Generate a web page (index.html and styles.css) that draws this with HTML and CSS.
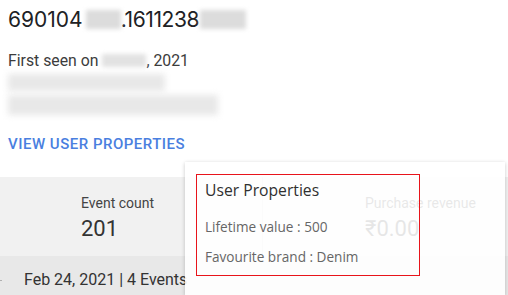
FILE: index.html
```html
<!DOCTYPE html>
<html>
<head>
<meta charset="utf-8">
<link rel="stylesheet" href="styles.css">
</head>
<body>
<div class="header">
  <h1 class="user-id"><span class="id-part">690104</span><span class="blur blur-a"></span><span class="id-part id-tail">.1611238</span><span class="blur blur-b"></span></h1>
  <div class="first-seen">First seen on <span class="blur blur-c"></span>, 2021</div>
  <div class="blur-line line-1"></div>
  <div class="blur-line line-2"></div>
  <div class="link">VIEW USER PROPERTIES</div>
</div>
<div class="stats">
  <div class="stat stat-first">
    <div class="stat-label">Event count</div>
    <div class="stat-value">201</div>
  </div>
  <div class="stat stat-second">
    <div class="stat-label">Purchase revenue</div>
    <div class="stat-value">₹0.00</div>
  </div>
</div>
<div class="day-strip">
  <span class="chev"></span>
  <span class="day-text">Feb 24, 2021 | 4 Events</span>
</div>
<div class="popover">
  <div class="highlight">
    <div class="pop-title">User Properties</div>
    <div class="pop-row">Lifetime value : 500</div>
    <div class="pop-row">Favourite brand : Denim</div>
  </div>
</div>
</body>
</html>
```
FILE: styles.css
```css
html, body {
  margin: 0;
  padding: 0;
  background: #ffffff;
  overflow: hidden;
}
body {
  font-family: Roboto, "Liberation Sans", sans-serif;
  color: #333333;
  width: 508px;
  height: 295px;
  position: relative;
}
.header {
  padding: 5px 8px 0 8px;
}
.user-id {
  margin: 0;
  font-family: Inter, Roboto, sans-serif;
  font-size: 21px;
  font-weight: 400;
  line-height: 29px;
  color: #202124;
  white-space: nowrap;
  display: flex;
  align-items: flex-start;
}
.id-part {
  display: inline-block;
}
.id-tail {
  letter-spacing: -0.4px;
}
.blur {
  display: inline-block;
  vertical-align: top;
  background: #dcdcdc;
  filter: blur(2px);
}
.blur-a {
  width: 35px;
  height: 19px;
  margin-top: 5px;
  margin-left: 3px;
}
.blur-b {
  width: 46px;
  height: 19px;
  margin-top: 5px;
  margin-left: 1px;
}
.first-seen {
  margin-top: 16px;
  font-size: 15.8px;
  line-height: 21px;
  color: #3c3c3c;
  white-space: nowrap;
}
.blur-c {
  width: 44px;
  height: 13px;
  margin-top: 4px;
  background: #e2e2e2;
}
.blur-line {
  background: #e8e8e8;
  filter: blur(3px);
}
.line-1 {
  width: 157px;
  height: 17px;
  margin-top: 3px;
}
.line-2 {
  width: 210px;
  height: 20px;
  margin-top: 4px;
}
.link {
  margin-top: 19px;
  font-size: 15px;
  font-weight: 500;
  line-height: 20px;
  letter-spacing: 0.5px;
  color: #4a7fe0;
  white-space: nowrap;
}
.stats {
  margin-top: 23px;
  height: 79px;
  background: #f1f1f1;
  display: flex;
}
.stat {
  padding-top: 16px;
  box-sizing: border-box;
}
.stat-first {
  width: 262px;
  padding-left: 81px;
}
.stat-second {
  border-left: 1px solid #d9d9d9;
  padding-left: 102px;
}
.stat-label {
  font-size: 14px;
  line-height: 20px;
  color: #444444;
  white-space: nowrap;
}
.stat-value {
  margin-top: 2px;
  font-size: 22px;
  line-height: 28px;
  color: #333333;
  white-space: nowrap;
}
.day-strip {
  height: 40px;
  background: #e8e8e8;
  padding-top: 14px;
  box-sizing: border-box;
  display: flex;
  align-items: flex-start;
}
.chev {
  width: 2px;
  height: 1px;
  margin-top: 10px;
  background: #b0b0b0;
}
.day-text {
  margin-left: 22px;
  font-size: 16px;
  line-height: 20px;
  color: #333333;
  white-space: nowrap;
}
.popover {
  position: absolute;
  left: 185px;
  top: 162px;
  width: 320px;
  height: 133px;
  background: rgba(255, 255, 255, 0.88);
  box-shadow: 0 1px 4px rgba(0, 0, 0, 0.22);
  padding: 12px 0 0 11px;
  box-sizing: border-box;
}
.highlight {
  width: 224px;
  height: 102px;
  box-sizing: border-box;
  border: 1px solid #e8141b;
  padding: 5px 0 0 8px;
  font-family: "Open Sans", Roboto, sans-serif;
}
.pop-title {
  font-size: 15.7px;
  font-weight: 500;
  line-height: 20px;
  color: #303030;
  margin-bottom: 12px;
}
.pop-row {
  font-size: 13.6px;
  line-height: 30px;
  color: #666666;
  white-space: nowrap;
}
```
